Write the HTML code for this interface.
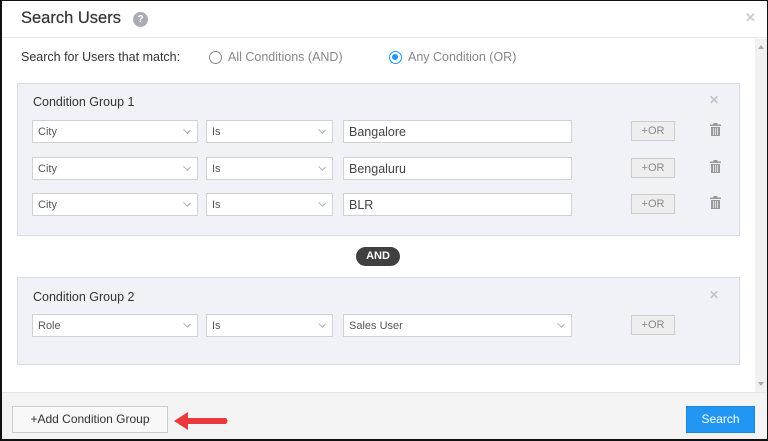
<!DOCTYPE html>
<html><head><style>
*{box-sizing:border-box;margin:0;padding:0}
body{width:768px;height:441px;overflow:hidden;background:#fff;font-family:"Liberation Sans",sans-serif;position:relative;color:#333}
.frame{position:absolute;left:0;top:0;width:768px;height:441px;border:1px solid #111;border-left-width:2px;border-bottom-width:2px;z-index:10;pointer-events:none}
.abs{position:absolute}
.hdr{left:0;top:0;width:768px;height:38px;border-bottom:1px solid #e6e6e6}
.title{left:21px;top:9px;font-size:16.5px;color:#333;-webkit-text-stroke:0.2px #333}
.help{left:132px;top:12px;width:15px;height:15px;border-radius:50%;background:#a8adb5;color:#fff;font-size:10px;font-weight:bold;text-align:center;line-height:15px}
.close{font-size:15px;color:#c4c4c4;font-weight:bold}
.scroll{left:755px;top:39px;width:13px;height:353px;background:#f1f1f1}
.lbl{font-size:12.5px}
.radio{width:13px;height:13px;border-radius:50%;border:1.5px solid #888;background:#fff}
.radio.on{border-color:#2196f3}
.radio.on::after{content:"";position:absolute;left:2px;top:2px;width:6px;height:6px;border-radius:50%;background:#2196f3}
.grp{left:17px;width:723px;background:#f1f2f7;border:1px solid #d9dbe0}
.gt{font-size:12.5px;color:#333}
.sel{height:23px;background:#fff;border:1px solid #cfd2d6;font-size:11px;color:#555;padding:5px 0 0 5px}
.sel .ch{position:absolute;right:7px;top:6px;width:6px;height:6px;border-right:1px solid #aaa;border-bottom:1px solid #aaa;transform:rotate(45deg) scale(1,0.8)}
.inp{height:23px;background:#fff;border:1px solid #cfd2d6;font-size:12.5px;color:#444;padding:4px 0 0 5px}
.or{width:44px;height:20px;background:#eeeeee;border:1px solid #ccc;font-size:11px;color:#888;text-align:center;line-height:18px}
.footer{left:0;top:392px;width:768px;height:49px;background:#f4f4f4;border-top:1px solid #e4e4e4}
</style></head><body>
<div class="abs hdr"></div>
<div class="abs title">Search Users</div>
<div class="abs help" style="left:133px">?</div>
<div class="abs close" style="left:745px;top:10px;font-size:13px;color:#ccc">✕</div>
<div class="abs scroll"><div style="position:absolute;left:3px;top:6px;border:3px solid transparent;border-bottom:4px solid #aaa;border-top:0"></div><div style="position:absolute;left:3px;bottom:6px;border:3px solid transparent;border-top:4px solid #aaa;border-bottom:0"></div></div>

<div class="abs lbl" style="left:21px;top:50px">Search for Users that match:</div>
<div class="abs radio" style="left:209px;top:51px"></div>
<div class="abs lbl" style="left:228px;top:50px;color:#888">All Conditions (AND)</div>
<div class="abs radio on" style="left:389px;top:51px"></div>
<div class="abs lbl" style="left:408px;top:50px;color:#888">Any Condition (OR)</div>

<div class="abs grp" style="top:83px;height:153px"></div>
<div class="abs gt" style="left:33px;top:95px">Condition Group 1</div>
<div class="abs close" style="left:709px;top:93px;font-size:12px">✕</div>

<div class="abs sel" style="left:32px;top:120px;width:166px">City<span class="ch"></span></div>
<div class="abs sel" style="left:206px;top:120px;width:127px">Is<span class="ch"></span></div>
<div class="abs inp" style="left:343px;top:120px;width:229px">Bangalore</div>
<div class="abs or" style="left:631px;top:121px">+OR</div>
<svg class="abs" style="left:710px;top:123px" width="11" height="13" viewBox="0 0 11 13"><rect x="0" y="1.5" width="11" height="1.5" fill="#999"/><rect x="3.5" y="0" width="4" height="2" fill="#999"/><rect x="1" y="4" width="9" height="9" fill="#999"/><g stroke="#f1f2f7" stroke-width="0.8"><line x1="3.5" y1="5" x2="3.5" y2="12"/><line x1="5.5" y1="5" x2="5.5" y2="12"/><line x1="7.5" y1="5" x2="7.5" y2="12"/></g></svg>

<div class="abs sel" style="left:32px;top:157px;width:166px">City<span class="ch"></span></div>
<div class="abs sel" style="left:206px;top:157px;width:127px">Is<span class="ch"></span></div>
<div class="abs inp" style="left:343px;top:157px;width:229px">Bengaluru</div>
<div class="abs or" style="left:631px;top:158px">+OR</div>
<svg class="abs" style="left:710px;top:160px" width="11" height="13" viewBox="0 0 11 13"><rect x="0" y="1.5" width="11" height="1.5" fill="#999"/><rect x="3.5" y="0" width="4" height="2" fill="#999"/><rect x="1" y="4" width="9" height="9" fill="#999"/><g stroke="#f1f2f7" stroke-width="0.8"><line x1="3.5" y1="5" x2="3.5" y2="12"/><line x1="5.5" y1="5" x2="5.5" y2="12"/><line x1="7.5" y1="5" x2="7.5" y2="12"/></g></svg>

<div class="abs sel" style="left:32px;top:193px;width:166px">City<span class="ch"></span></div>
<div class="abs sel" style="left:206px;top:193px;width:127px">Is<span class="ch"></span></div>
<div class="abs inp" style="left:343px;top:193px;width:229px">BLR</div>
<div class="abs or" style="left:631px;top:194px">+OR</div>
<svg class="abs" style="left:710px;top:196px" width="11" height="13" viewBox="0 0 11 13"><rect x="0" y="1.5" width="11" height="1.5" fill="#999"/><rect x="3.5" y="0" width="4" height="2" fill="#999"/><rect x="1" y="4" width="9" height="9" fill="#999"/><g stroke="#f1f2f7" stroke-width="0.8"><line x1="3.5" y1="5" x2="3.5" y2="12"/><line x1="5.5" y1="5" x2="5.5" y2="12"/><line x1="7.5" y1="5" x2="7.5" y2="12"/></g></svg>

<div class="abs" style="left:356px;top:247px;width:44px;height:19px;border-radius:10px;background:#404040;color:#fff;font-size:11px;font-weight:bold;text-align:center;line-height:19px">AND</div>

<div class="abs grp" style="top:277px;height:88px"></div>
<div class="abs gt" style="left:33px;top:290px">Condition Group 2</div>
<div class="abs close" style="left:709px;top:288px;font-size:12px">✕</div>
<div class="abs sel" style="left:32px;top:314px;width:166px">Role<span class="ch"></span></div>
<div class="abs sel" style="left:206px;top:314px;width:127px">Is<span class="ch"></span></div>
<div class="abs sel" style="left:343px;top:314px;width:229px">Sales User<span class="ch"></span></div>
<div class="abs or" style="left:631px;top:315px">+OR</div>

<div class="abs footer"></div>
<div class="abs" style="left:12px;top:406px;width:156px;height:27px;background:#f8f8f8;border:1px solid #ccc;font-size:12px;color:#333;text-align:center;line-height:25px">+Add Condition Group</div>
<svg class="abs" style="left:172px;top:410px" width="58" height="22" viewBox="0 0 58 22"><path d="M2 11 L16 2 L16 8 L54 8 Q57 11 54 14 L16 14 L16 20 Z" fill="#e83a3f"/></svg>
<div class="abs" style="left:686px;top:406px;width:69px;height:27px;background:#2196f3;border:1px solid #1a86dd;color:#fff;font-size:12px;text-align:center;line-height:25px">Search</div>
<div class="frame"></div>
</body></html>
